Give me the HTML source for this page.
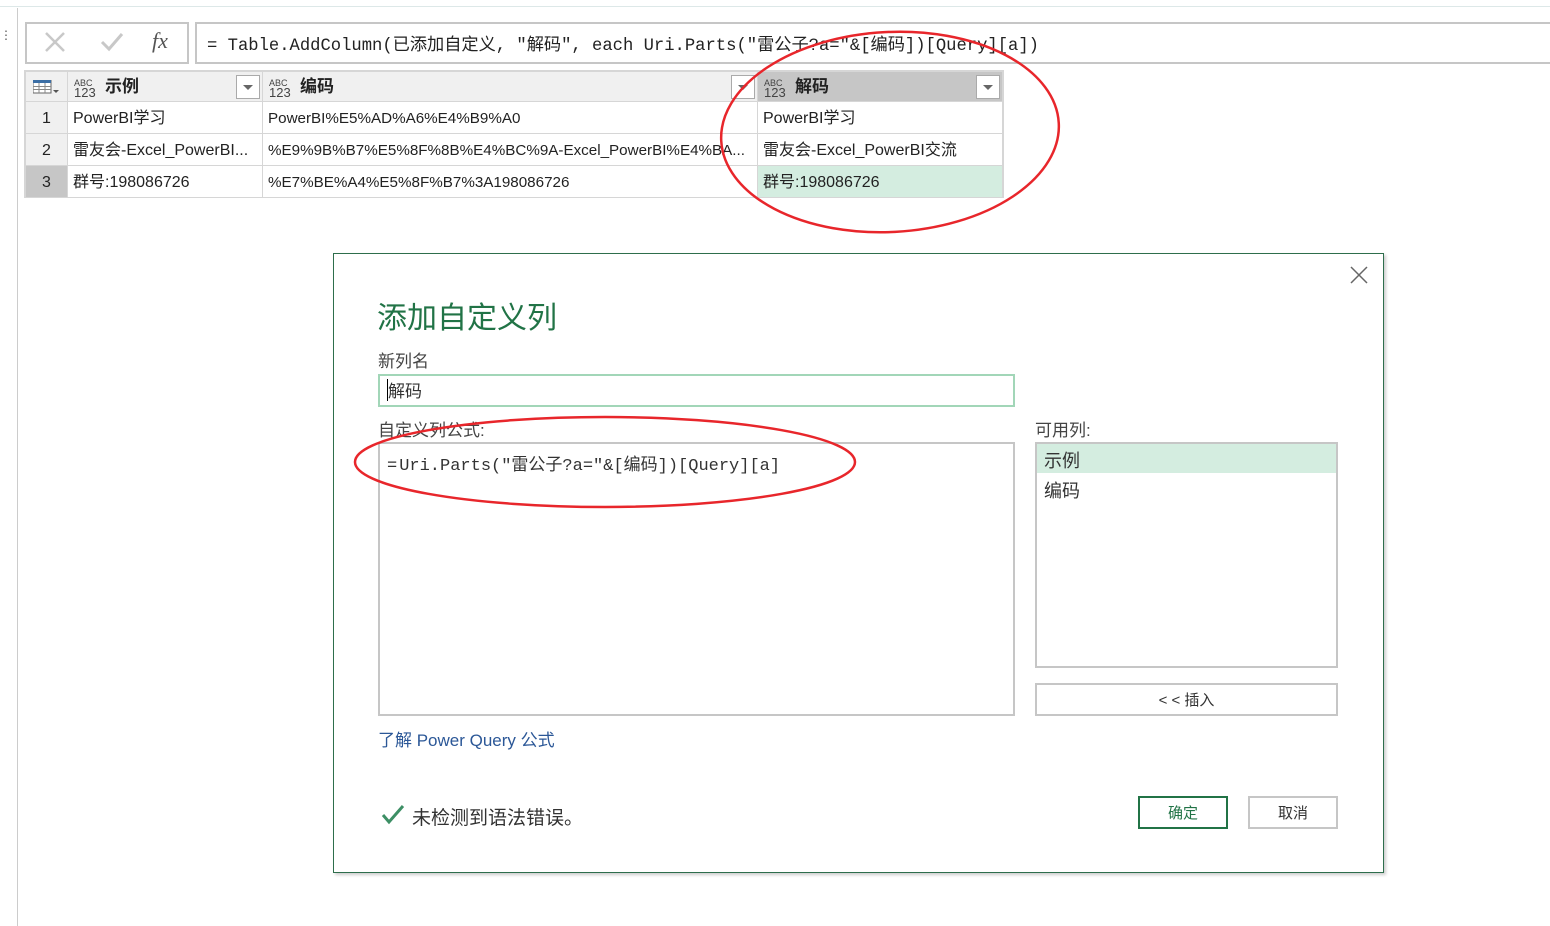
<!DOCTYPE html>
<html><head><meta charset="utf-8"><style>
body{margin:0;width:1550px;height:926px;background:#fff;position:relative;overflow:hidden;font-family:"Liberation Sans","Noto Sans CJK SC",sans-serif;color:#333}
.a{position:absolute;box-sizing:border-box}
.mono{font-family:"Liberation Mono","Noto Sans CJK SC",monospace}
.cell{position:absolute;box-sizing:border-box;font-size:16px;line-height:33px;padding-left:5px;white-space:nowrap;overflow:hidden;background:#fff;color:#222}
.hd{background:#f0f0f0;font-weight:bold;font-size:17px;line-height:29px}
.abc{position:absolute;font-size:9px;line-height:9px;top:7px;font-weight:normal;color:#444}
.abc b{font-size:13px;font-weight:normal;display:block}
.dd{position:absolute;width:22px;height:22px;border:1px solid #aaa;background:#fff;top:3px}
.dd:after{content:"";position:absolute;left:6px;top:9px;border:5px solid transparent;border-top:5px solid #666}
</style></head><body>
<div class="a" style="left:0;top:6px;width:1550px;height:1px;background:#dde8e8"></div>
<div class="a" style="left:17px;top:8px;width:1px;height:918px;background:#ccc"></div>
<div class="a" style="left:0;top:28px;font-size:12px;color:#555">&#8942;</div>
<div class="a" style="left:25px;top:22px;width:164px;height:42px;border:2px solid #c6c6c6"></div>
<svg class="a" style="left:44px;top:31px" width="22" height="22"><path d="M2 2L20 20M20 2L2 20" stroke="#c8c8c8" stroke-width="2.5"/></svg>
<svg class="a" style="left:100px;top:31px" width="24" height="22"><path d="M2 11L9 18L22 3" fill="none" stroke="#c8c8c8" stroke-width="3"/></svg>
<div class="a" style="left:152px;top:28px;font-size:22px;font-style:italic;font-family:'Liberation Serif',serif;color:#555">fx</div>
<div class="a" style="left:195px;top:22px;width:1360px;height:42px;border:2px solid #c6c6c6"></div>
<div class="a mono" style="left:207px;top:30px;font-size:17.2px;color:#222;white-space:nowrap">= Table.AddColumn(已添加自定义, "解码", each Uri.Parts("雷公子?a="&amp;[编码])[Query][a])</div>
<div class="a" style="left:24px;top:70px;width:980px;height:128px;background:#d6d6d6"></div>
<div class="cell hd" style="left:26px;top:72px;width:41px;height:29px"><svg style="position:absolute;left:7px;top:8px" width="26" height="16"><rect x="0" y="0" width="18" height="13" fill="#fff" stroke="#666"/><rect x="0" y="0" width="18" height="3" fill="#3b6ea5"/><path d="M0 6.5H18M0 9.5H18M6 3V13M12 3V13" stroke="#888"/><path d="M20 10l3 3 3-3z" fill="#555"/></svg></div>
<div class="cell hd" style="left:68px;top:72px;width:194px;height:29px;padding-left:37px">示例<div class="abc" style="left:6px">ABC<b>123</b></div><div class="dd" style="left:168px"></div></div>
<div class="cell hd" style="left:263px;top:72px;width:494px;height:29px;padding-left:37px">编码<div class="abc" style="left:6px">ABC<b>123</b></div><div class="dd" style="left:468px"></div></div>
<div class="cell hd" style="left:758px;top:72px;width:244px;height:29px;padding-left:37px;background:#c6c6c6">解码<div class="abc" style="left:6px">ABC<b>123</b></div><div class="dd" style="left:218px"></div></div>
<div class="cell" style="left:26px;top:102px;width:41px;height:31px;text-align:center;padding:0;background:#f0f0f0">1</div>
<div class="cell" style="left:26px;top:134px;width:41px;height:31px;text-align:center;padding:0;background:#f0f0f0">2</div>
<div class="cell" style="left:26px;top:166px;width:41px;height:31px;text-align:center;padding:0;background:#c6c6c6">3</div>
<div class="cell" style="left:68px;top:102px;width:194px;height:31px">PowerBI学习</div>
<div class="cell" style="left:68px;top:134px;width:194px;height:31px">雷友会-Excel_PowerBI...</div>
<div class="cell" style="left:68px;top:166px;width:194px;height:31px">群号:198086726</div>
<div class="cell" style="left:263px;top:102px;width:494px;height:31px;font-size:15.2px">PowerBI%E5%AD%A6%E4%B9%A0</div>
<div class="cell" style="left:263px;top:134px;width:494px;height:31px;font-size:15.2px">%E9%9B%B7%E5%8F%8B%E4%BC%9A-Excel_PowerBI%E4%BA...</div>
<div class="cell" style="left:263px;top:166px;width:494px;height:31px;font-size:15.2px">%E7%BE%A4%E5%8F%B7%3A198086726</div>
<div class="cell" style="left:758px;top:102px;width:244px;height:31px">PowerBI学习</div>
<div class="cell" style="left:758px;top:134px;width:244px;height:31px">雷友会-Excel_PowerBI交流</div>
<div class="cell" style="left:758px;top:166px;width:244px;height:31px;background:#d4ede0">群号:198086726</div>
<div class="a" style="left:333px;top:253px;width:1051px;height:620px;border:1px solid #2e6e4c;background:#fff;box-shadow:2px 2px 3px rgba(0,0,0,.2)"></div>
<svg class="a" style="left:1350px;top:266px" width="18" height="18"><path d="M1 1L17 17M17 1L1 17" stroke="#666" stroke-width="1.5"/></svg>
<div class="a" style="left:377px;top:293px;font-size:30px;color:#217346">添加自定义列</div>
<div class="a" style="left:378px;top:347px;font-size:17px;color:#444">新列名</div>
<div class="a" style="left:378px;top:374px;width:637px;height:33px;border:2px solid #a2d6b8;font-size:17px;line-height:31px;padding-left:8px;color:#333">解码</div>
<div class="a" style="left:387px;top:379px;width:1px;height:22px;background:#000"></div>
<div class="a" style="left:378px;top:416px;font-size:17px;color:#444">自定义列公式:</div>
<div class="a" style="left:378px;top:442px;width:637px;height:274px;border:2px solid #c6c6c6"></div>
<div class="a mono" style="left:387px;top:450px;font-size:17px;color:#333;white-space:nowrap">=<span style="margin-left:2px">Uri.Parts("雷公子?a="&amp;[编码])[Query][a]</span></div>
<div class="a" style="left:1035px;top:416px;font-size:17px;color:#444">可用列:</div>
<div class="a" style="left:1035px;top:442px;width:303px;height:226px;border:2px solid #c6c6c6"></div>
<div class="a" style="left:1037px;top:444px;width:299px;height:29px;background:#d4ede0"></div>
<div class="a" style="left:1044px;top:447px;font-size:18px;color:#333">示例</div>
<div class="a" style="left:1044px;top:477px;font-size:18px;color:#333">编码</div>
<div class="a" style="left:1035px;top:683px;width:303px;height:33px;border:2px solid #c6c6c6;text-align:center;font-size:15px;line-height:31px;color:#333">&lt; &lt; 插入</div>
<div class="a" style="left:378px;top:726px;font-size:17px;color:#2b5797">了解 Power Query 公式</div>
<svg class="a" style="left:381px;top:803px" width="24" height="22"><path d="M2 12L8 19L22 3" fill="none" stroke="#3d8f65" stroke-width="3"/></svg>
<div class="a" style="left:412px;top:803px;font-size:19px;color:#333">未检测到语法错误。</div>
<div class="a" style="left:1138px;top:796px;width:90px;height:33px;border:2px solid #217346;text-align:center;font-size:15px;line-height:31px;color:#217346">确定</div>
<div class="a" style="left:1248px;top:796px;width:90px;height:33px;border:2px solid #c6c6c6;text-align:center;font-size:15px;line-height:31px;color:#333">取消</div>
<svg class="a" style="left:0;top:0" width="1550" height="926"><ellipse cx="890" cy="132" rx="169" ry="100" fill="none" stroke="#e8262b" stroke-width="2.5" transform="rotate(-3 890 132)"/><ellipse cx="605" cy="462" rx="250" ry="45" fill="none" stroke="#e8262b" stroke-width="2.5"/></svg>
</body></html>
